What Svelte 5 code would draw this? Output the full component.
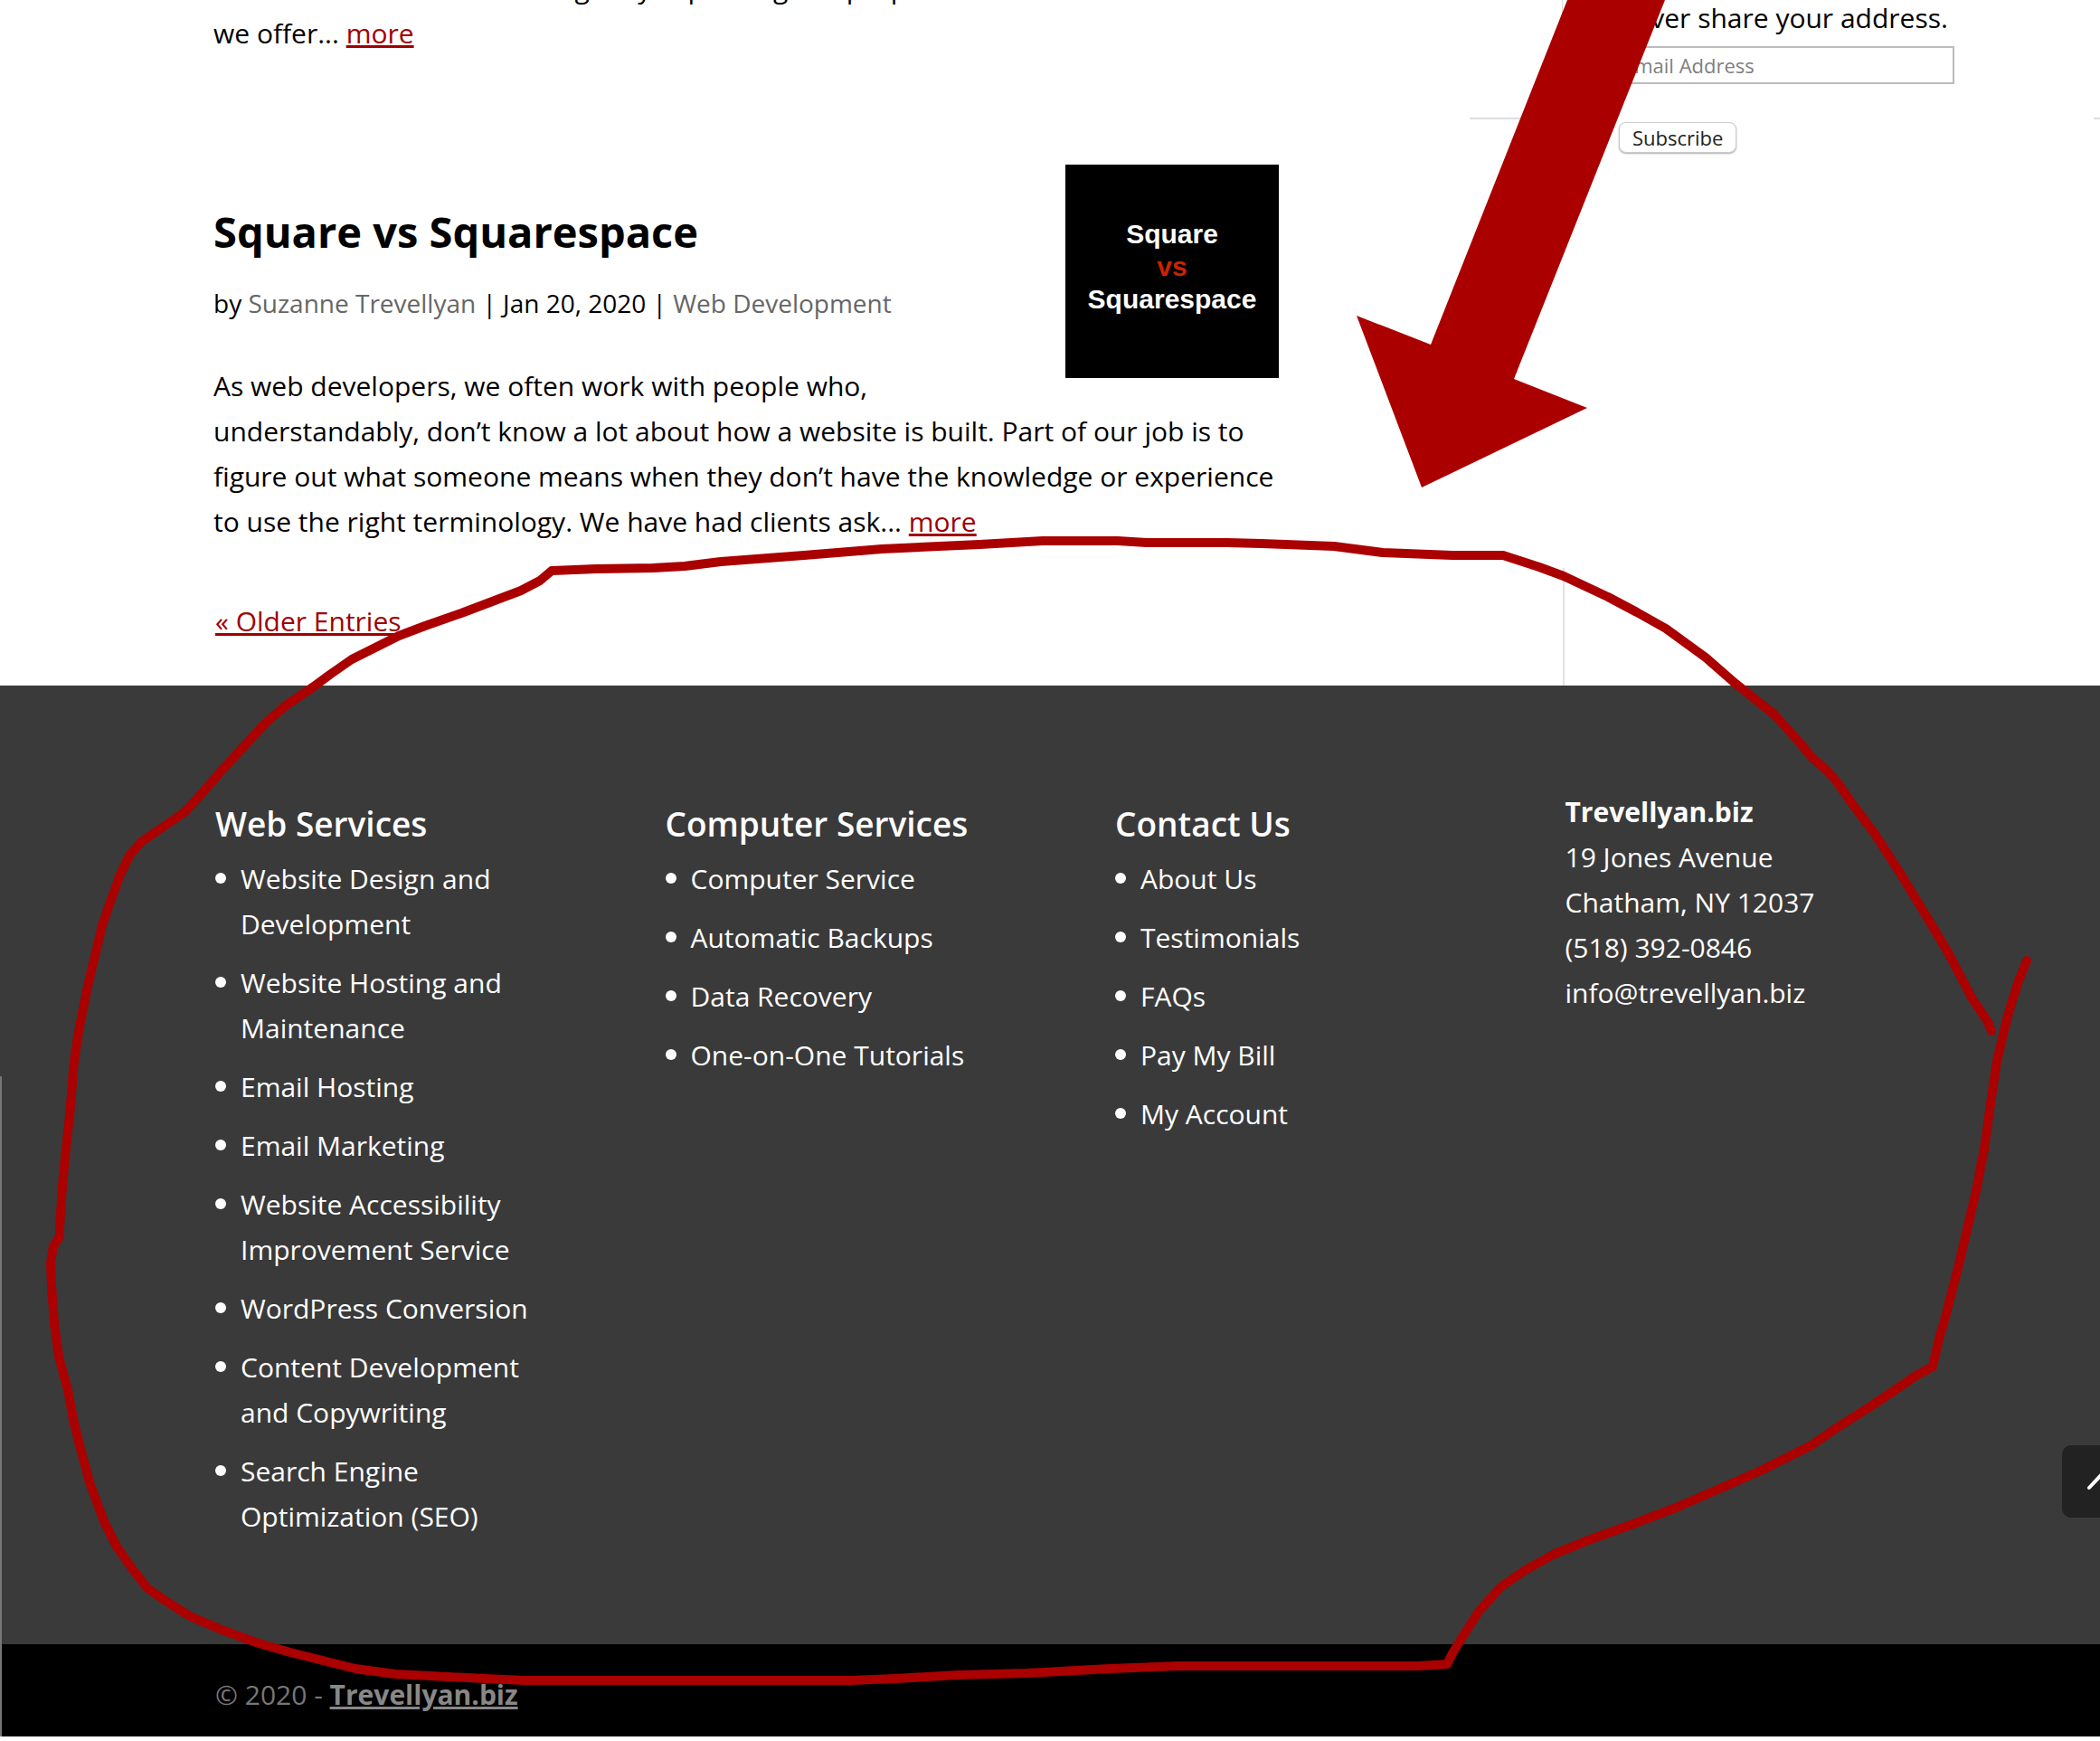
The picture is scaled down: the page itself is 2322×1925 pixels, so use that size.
<script>
  const columns = [
    {
      title: "Web Services",
      links: [
        "Website Design and Development",
        "Website Hosting and Maintenance",
        "Email Hosting",
        "Email Marketing",
        "Website Accessibility Improvement Service",
        "WordPress Conversion",
        "Content Development and Copywriting",
        "Search Engine Optimization (SEO)",
      ],
    },
    {
      title: "Computer Services",
      links: ["Computer Service", "Automatic Backups", "Data Recovery", "One-on-One Tutorials"],
    },
    {
      title: "Contact Us",
      links: ["About Us", "Testimonials", "FAQs", "Pay My Bill", "My Account"],
    },
  ];

  let email = "";
</script>

<div class="page">
  <div class="main">
    <main>
      <p class="excerpt first">
        Our team has had some fun gently explaining our purpose<br />
        we offer... <a href="#more">more</a>
      </p>

      <article>
        <div class="thumb">
          <span>Square</span>
          <span class="red">vs</span>
          <span>Squarespace</span>
        </div>
        <h2>Square vs Squarespace</h2>
        <p class="meta">
          by <a href="#author">Suzanne Trevellyan</a> | Jan 20, 2020 | <a href="#category">Web Development</a>
        </p>
        <p class="excerpt">
          As web developers, we often work with people who, understandably, don’t know a lot about how a
          website is built. Part of our job is to figure out what someone means when they don’t have the
          knowledge or experience to use the right terminology. We have had clients ask...
          <a href="#more">more</a>
        </p>
      </article>

      <nav><a href="#older">« Older Entries</a></nav>
    </main>

    <aside>
      <form class="widget" on:submit|preventDefault>
        <label for="email">never share your address.</label>
        <input id="email" type="email" placeholder="Email Address" bind:value={email} />
        <button type="submit">Subscribe</button>
      </form>
      <div class="divider"></div>
    </aside>
  </div>

  <footer>
    <div class="columns">
      {#each columns as column}
        <section>
          <h4>{column.title}</h4>
          <ul>
            {#each column.links as link}
              <li><a href="#link">{link}</a></li>
            {/each}
          </ul>
        </section>
      {/each}
      <address>
        <strong>Trevellyan.biz</strong><br />
        19 Jones Avenue<br />
        Chatham, NY 12037<br />
        (518) 392-0846<br />
        info@trevellyan.biz
      </address>
    </div>
    <div class="bottom">© 2020 - <a href="#home">Trevellyan.biz</a></div>
  </footer>

  <button class="top" aria-label="Back to top">
    <svg viewBox="0 0 42 80" width="42" height="80">
      <path d="M30 47 L46 30" fill="none" stroke="#fff" stroke-width="4" stroke-linecap="round" />
    </svg>
  </button>

  <svg class="marks" viewBox="0 0 2322 1925" aria-hidden="true">
    <polygon points="1733,0 1841,0 1674,419 1755,451 1572,539 1500,349 1582,381" />
    <polyline
      points="2202,1140 2198,1130 2180,1103 2155,1055 2130,1013 2102,967 2073,922 2049,890 2030,863
      2020,852 2003,837 1989,820 1962,790 1918,755 1886,727 1842,695 1810,677 1778,660 1729,637
      1702,627 1662,614 1606,614 1529,611 1475,604 1395,601 1357,600 1268,600 1236,598 1153,598
      1083,602 975,607 889,614 797,621 757,626 722,628 659,629 610,631 597,642 576,653 510,678
      470,692 441,703 389,729 366,745 347,759 316,780 293,800 270,825 245,852 219,882 204,898
      156,931 143,946 133,967 122,997 113,1023 105,1057 97,1090 87,1140 82,1173 77,1233 73,1269
      69,1311 66,1357 66,1367 59,1378 56,1396 57,1422 60,1463 65,1500 75,1537 81,1569 89,1602
      100,1642 115,1682 129,1710 145,1733 163,1756 183,1770 210,1787 245,1802 286,1817 321,1827
      393,1845 437,1851 536,1856 580,1858 940,1858 990,1856 1059,1852 1135,1850 1227,1845
      1304,1842 1568,1842 1600,1840 1606,1828 1617,1810 1635,1782 1659,1755 1685,1737 1717,1719
      1756,1703 1806,1685 1853,1667 1906,1644 1947,1626 2003,1598 2029,1580 2076,1550 2117,1522
      2137,1511 2144,1480 2150,1460 2165,1402 2185,1317 2194,1270 2202,1213 2208,1173 2220,1123
      2231,1087 2241,1062"
    />
  </svg>
</div>

<style>
  :global(body) {
    margin: 0;
    background: #fff;
  }

  .page {
    position: relative;
    overflow: hidden;
    padding-bottom: 5px;
    font-family: "Open Sans", sans-serif;
    font-size: 30px;
    line-height: 50px;
    color: #000;
  }

  .main {
    display: grid;
    grid-template-columns: minmax(0, 1178px) minmax(0, 1fr);
    column-gap: 211px;
    padding-left: 236px;
    overflow: hidden;
  }

  main {
    padding-bottom: 46px;
  }

  p {
    margin: 0;
  }

  .first {
    margin-top: -38px;
  }

  .excerpt a,
  nav a {
    color: #a00000;
  }

  article {
    margin-top: 120px;
  }

  .thumb {
    float: right;
    box-sizing: border-box;
    width: 236px;
    height: 236px;
    margin: 0 0 20px 30px;
    padding-top: 59px;
    display: flex;
    flex-direction: column;
    align-items: center;
    background: #000;
    color: #fff;
    font: bold 30px/36px "Liberation Sans", sans-serif;
  }

  .red {
    color: #cc2200;
  }

  h2 {
    margin: 0;
    padding-top: 50px;
    font-size: 47px;
    line-height: 48px;
  }

  .meta {
    margin: 30px 0 42px;
    font-size: 28px;
  }

  .meta a {
    color: #666;
    text-decoration: none;
  }

  nav {
    margin-top: 60px;
    padding-left: 2px;
  }

  aside {
    position: relative;
    display: flex;
    flex-direction: column;
    justify-content: space-between;
  }

  aside::before {
    content: "";
    position: absolute;
    top: 130px;
    left: 0;
    right: 0;
    height: 2px;
    background: #dcdce2;
  }

  .widget {
    position: relative;
    display: flex;
    flex-direction: column;
    align-items: flex-start;
    margin: -5px 7px 0 102px;
    padding: 0 0 24px 62px;
    border-left: 1px solid #ddd;
    background: #fff;
  }

  input {
    box-sizing: border-box;
    width: 371px;
    height: 42px;
    margin: 6px 0 42px;
    padding: 0 3px;
    border: 2px solid #bbb;
    font: 22px "Open Sans", sans-serif;
  }

  input::placeholder {
    color: #808080;
  }

  .widget button {
    height: 34px;
    padding: 0 14px;
    border: 1px solid #ccc;
    border-radius: 8px;
    background: #fff;
    box-shadow: 0 1px 2px #aaa;
    color: #222;
    font: 22px/30px "Open Sans", sans-serif;
  }

  .divider {
    height: 130px;
    margin-left: 103px;
    border-left: 2px solid #e2e2e2;
  }

  footer {
    position: relative;
    background: #3a3a3a;
    color: #fff;
  }

  /* sliver of the window behind */
  footer::before {
    content: "";
    position: absolute;
    left: 0;
    top: 432px;
    bottom: 0;
    width: 2px;
    background: #777;
  }

  .columns {
    display: grid;
    grid-template-columns: repeat(4, minmax(0, 1fr));
    column-gap: 144px;
    padding: 115px 238px 101px;
  }

  h4 {
    margin: 20px 0 18px;
    font-size: 37px;
    font-weight: 600;
    line-height: 36px;
    white-space: nowrap;
  }

  ul {
    margin: 0;
    padding: 0;
    list-style: none;
  }

  li {
    display: flex;
    margin-bottom: 15px;
  }

  li::before {
    content: "";
    flex: none;
    width: 12px;
    height: 12px;
    margin: 18px 16px 0 0;
    border-radius: 50%;
    background: #fff;
  }

  li a {
    color: #fff;
    text-decoration: none;
  }

  address {
    font-style: normal;
  }

  .bottom {
    padding: 31px 238px 21px;
    background: #000;
    color: #777;
  }

  .bottom a {
    color: #888;
    font-weight: 700;
  }

  .top {
    position: absolute;
    right: 0;
    bottom: 247px;
    width: 42px;
    height: 80px;
    padding: 0;
    border: 0;
    border-radius: 10px 0 0 10px;
    background: #222;
  }

  .top svg {
    display: block;
  }

  .marks {
    position: absolute;
    top: 0;
    left: 0;
    width: 100%;
    pointer-events: none;
  }

  .marks polygon {
    fill: #a00;
  }

  .marks polyline {
    fill: none;
    stroke: #a00;
    stroke-width: 10px;
    stroke-linecap: round;
    stroke-linejoin: round;
  }
</style>
